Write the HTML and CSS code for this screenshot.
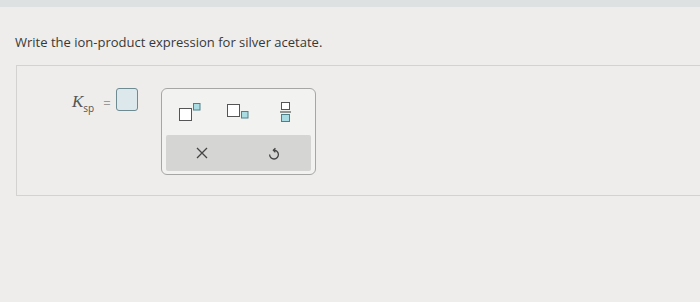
FILE: index.html
```html
<!DOCTYPE html>
<html lang="en">
<head>
    <meta charset="UTF-8">
    <title>Ion-product expression</title>
    <link rel="stylesheet" href="styles.css">
</head>
<body>
    <div class="topbar"></div>

    <p class="question">Write the ion-product expression for silver acetate.</p>

    <div class="answer">
        <div class="expr">
            <span class="k">K</span><span class="sub">sp</span>
            <span class="eq">=</span>
            <span class="slot"></span>
        </div>

        <div class="palette">
            <div class="tools">
                <button class="tool" title="superscript">
                    <svg width="24" height="20" viewBox="0 0 24 20">
                        <rect x="1.5" y="6.5" width="12" height="12" fill="#fff" stroke="#555"/>
                        <rect x="15.5" y="1.5" width="6.5" height="6.5" fill="#a9dde3" stroke="#4f8088"/>
                    </svg>
                </button>
                <button class="tool" title="subscript">
                    <svg width="24" height="20" viewBox="0 0 24 20">
                        <rect x="1.5" y="2.5" width="12" height="12" fill="#fff" stroke="#555"/>
                        <rect x="15.5" y="9.5" width="6.5" height="6.5" fill="#a9dde3" stroke="#4f8088"/>
                    </svg>
                </button>
                <button class="tool" title="fraction">
                    <svg width="14" height="22" viewBox="0 0 14 22">
                        <rect x="2.5" y="1.5" width="8" height="7" fill="#fff" stroke="#555"/>
                        <line x1="1" y1="11" x2="12" y2="11" stroke="#555" stroke-width="1.2"/>
                        <rect x="2.5" y="13.5" width="8" height="7" fill="#a9dde3" stroke="#4f8088"/>
                    </svg>
                </button>
            </div>
            <div class="actions">
                <button class="tool" title="clear">
                    <svg width="12" height="12" viewBox="0 0 12 12">
                        <path d="M1 1 L11 11 M11 1 L1 11" stroke="#444" stroke-width="1.3" fill="none"/>
                    </svg>
                </button>
                <button class="tool" title="undo">
                    <svg width="12" height="14" viewBox="0 0 12 14">
                        <path d="M5.6 4.2 A4.4 4.4 0 1 1 1.6 8.6" stroke="#444" stroke-width="1.3" fill="none"/>
                        <path d="M7.4 2.2 L5.4 4.2 L7.4 6.2" stroke="#444" stroke-width="1.3" fill="none"/>
                    </svg>
                </button>
            </div>
        </div>
    </div>
</body>
</html>
```

FILE: styles.css
```css
body {
    margin: 0;
    background: #eeedeb;
    font-family: 'Open Sans', sans-serif;
    color: #383838;
    overflow: hidden;
}

.topbar {
    height: 7px;
    background: #dde1e1;
}

.question {
    margin: 26px 0 0 15px;
    font-size: 13px;
    line-height: 18px;
}

.answer {
    box-sizing: border-box;
    margin: 14px 0 0 16px;
    height: 131px;
    border: 1px solid #d3d2d0;
    border-right: 0;
    display: flex;
    align-items: flex-start;
    padding: 22px 0 0 55px;
}

.expr {
    display: flex;
    align-items: flex-start;
    margin-top: 5px;
}

.k {
    font-family: 'Liberation Serif', serif;
    font-style: italic;
    font-size: 17px;
    line-height: 17px;
    color: #555;
}

.sub {
    font-size: 10px;
    margin-top: 8px;
    color: #555;
}

.eq {
    font-size: 13px;
    color: #999;
    margin: 1px 5px 0 9px;
}

.slot {
    width: 20px;
    height: 21px;
    margin-top: -5px;
    background: #dce8ec;
    border: 1px solid #6d8b91;
    border-radius: 3px;
}

.palette {
    margin-left: 23px;
    width: 145px;
    height: 82px;
    padding: 0 4px 3px 4px;
    border: 1px solid #a6a6a5;
    border-radius: 6px;
    background: #f2f2f1;
    display: flex;
    flex-direction: column;
}

.tool {
    border: 0;
    background: none;
    padding: 0;
    flex: 1;
    display: flex;
    align-items: center;
    justify-content: center;
}

.tools {
    height: 46px;
    display: flex;
}

.actions {
    height: 36px;
    display: flex;
    background: #d5d5d4;
    border-radius: 2px;
}
```
